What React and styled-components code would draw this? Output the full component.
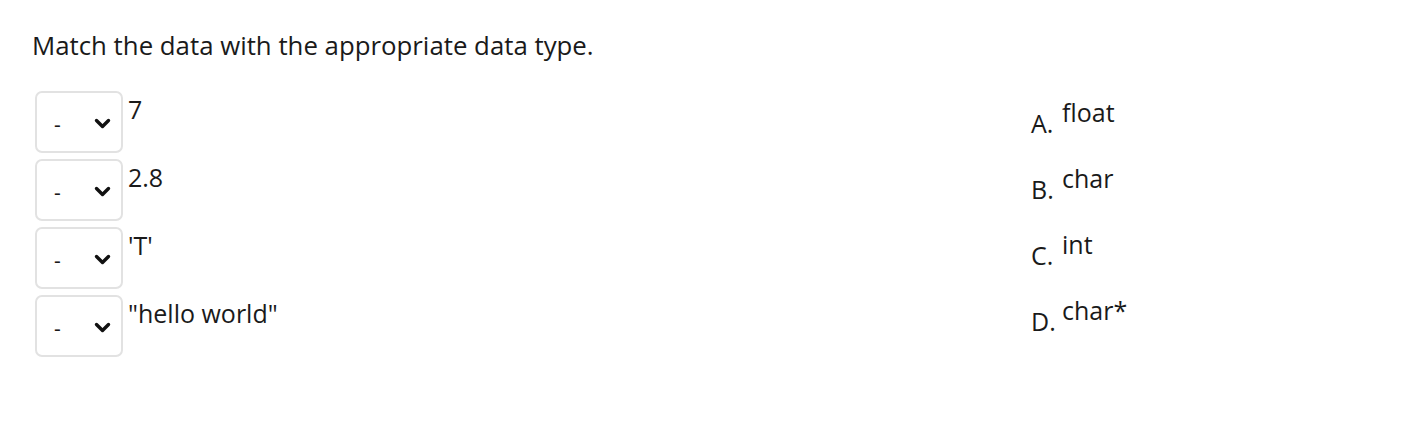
import React from 'react';
import styled, { createGlobalStyle } from 'styled-components';

const GlobalStyle = createGlobalStyle`
  body {
    margin: 0;
    background: #fff;
    font-family: "Open Sans", "Noto Sans", sans-serif;
    color: #1a1a1a;
  }
`;

const Page = styled.div`
  width: 1408px;
  height: 424px;
  box-sizing: border-box;
  padding: 27px 32px 0;
`;

const Title = styled.h1`
  margin: 0;
  font-size: 25.8px;
  font-weight: 400;
  line-height: 36px;
`;

const Board = styled.div`
  display: grid;
  grid-template-columns: 996px auto;
  margin-top: 28px;
  padding-left: 3px;
`;

const Pairs = styled.ul`
  list-style: none;
  margin: 0;
  padding: 0;
  display: flex;
  flex-direction: column;
  gap: 6px;
`;

const Pair = styled.li`
  display: flex;
  align-items: flex-start;
  gap: 5px;
`;

const Picker = styled.div`
  width: 88px;
  height: 62px;
  box-sizing: border-box;
  border: 2px solid #e2e2e2;
  border-radius: 7px;
  display: flex;
  align-items: center;
  justify-content: space-between;
  padding: 4px 10px 0 17px;
  font-size: 21px;
`;

const Value = styled.span`
  font-size: 25px;
  line-height: 36px;
`;

const Answers = styled.ol`
  list-style: none;
  margin: 3px 0 0;
  padding: 0;
  display: flex;
  flex-direction: column;
  gap: 19px;
`;

const Answer = styled.li`
  display: flex;
  align-items: flex-start;
`;

const Letter = styled.span`
  font-size: 25px;
  line-height: 36px;
  margin-top: 11px;
  width: 31px;
`;

const AnswerText = styled.span`
  font-size: 25px;
  line-height: 36px;
`;

const Chevron = () => (
  <svg width="17" height="12" viewBox="0 0 17 12">
    <path d="M2.5 2.5 L8.5 8.5 L14.5 2.5" fill="none" stroke="#111" strokeWidth="3.4" strokeLinecap="round" strokeLinejoin="round" />
  </svg>
);

const pairs = ['7', '2.8', "'T'", '"hello world"'];
const answers = [
  { letter: 'A.', text: 'float' },
  { letter: 'B.', text: 'char' },
  { letter: 'C.', text: 'int' },
  { letter: 'D.', text: 'char*' },
];

const App = () => (
  <>
    <GlobalStyle />
    <Page>
      <Title>Match the data with the appropriate data type.</Title>
      <Board>
        <Pairs>
          {pairs.map(p => (
            <Pair key={p}>
              <Picker>
                <span>-</span>
                <Chevron />
              </Picker>
              <Value>{p}</Value>
            </Pair>
          ))}
        </Pairs>
        <Answers>
          {answers.map(a => (
            <Answer key={a.letter}>
              <Letter>{a.letter}</Letter>
              <AnswerText>{a.text}</AnswerText>
            </Answer>
          ))}
        </Answers>
      </Board>
    </Page>
  </>
);

export default App;
